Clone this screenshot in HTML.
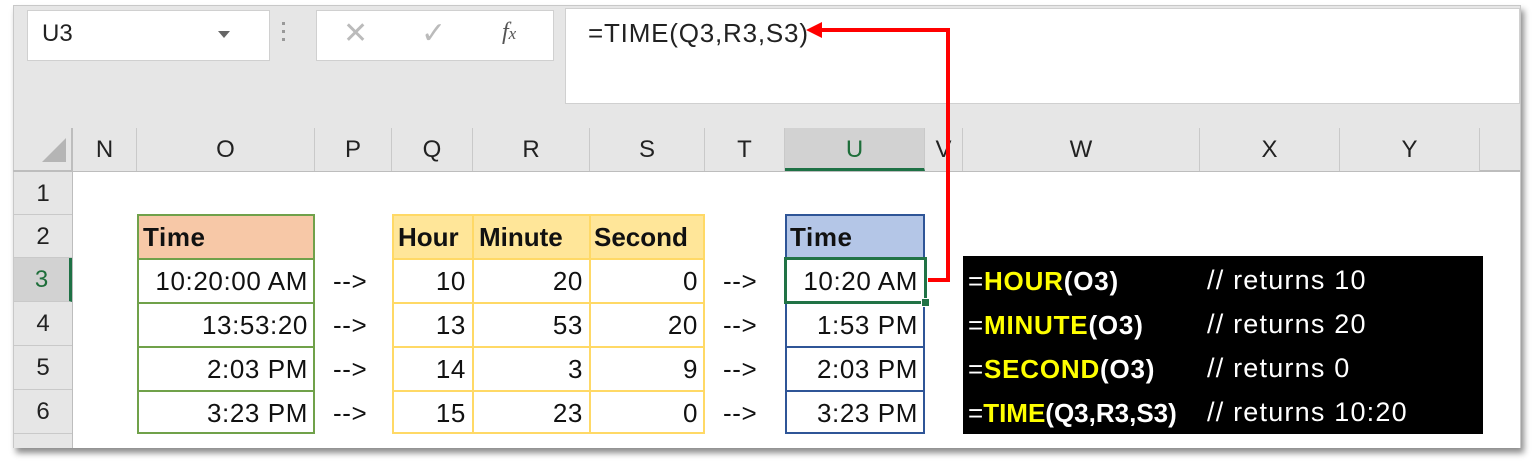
<!DOCTYPE html>
<html><head><meta charset="utf-8"><style>
*{margin:0;padding:0;box-sizing:border-box}
body{width:1536px;height:474px;background:#fff;position:relative;overflow:hidden;font-family:"Liberation Sans",sans-serif}
.a{position:absolute}
.frame{left:13px;top:5px;width:1508px;height:443px;background:#e6e6e6;border:1px solid #c8c8c8;box-shadow:3px 5px 6px rgba(0,0,0,.45)}
.box{background:#fff;border:1px solid #d0d0d0}
.ch{top:128px;height:43px;font-size:24px;color:#222;text-align:center;line-height:43px;border-right:1px solid #c9c9c9;background:#e6e6e6}
.rh{left:14px;width:58px;font-size:24px;color:#222;text-align:center;border-bottom:1px solid #c9c9c9;background:#e6e6e6}
.c{font-size:26px;color:#111;line-height:43px;padding:0 7px;letter-spacing:0.6px;white-space:nowrap}
.r{text-align:right}
.f{font-size:26px;color:#fff;letter-spacing:0.8px;white-space:nowrap}
.g{font-size:27px;letter-spacing:1.2px}
.y{color:#ffff00}
</style></head><body>
<div class="a frame"></div>
<div class="a box" style="left:27px;top:10px;width:243px;height:51px"></div>
<div class="a" style="left:42px;top:20px;font-size:24px;color:#222">U3</div>
<div class="a" style="left:218px;top:31px;width:0;height:0;border-left:6px solid transparent;border-right:6px solid transparent;border-top:7px solid #666"></div>
<div class="a" style="left:282px;top:22px;width:3px;height:3px;background:#999;box-shadow:0 8px 0 #999,0 16px 0 #999"></div>
<div class="a box" style="left:316px;top:10px;width:238px;height:51px"></div>
<div class="a" style="left:343px;top:16px;font-size:30px;color:#bbb">✕</div>
<div class="a" style="left:421px;top:16px;font-size:30px;color:#bbb">✓</div>
<div class="a" style="left:502px;top:19px;font-size:24px;color:#555;font-style:italic;font-family:'Liberation Serif',serif">f<span style="font-size:17px">x</span></div>
<div class="a box" style="left:565px;top:8px;width:955px;height:96px"></div>
<div class="a" style="left:588px;top:18px;font-size:26px;color:#222;letter-spacing:0.8px">=TIME(Q3,R3,S3)</div>
<!-- grid -->
<div class="a" style="left:72px;top:171px;width:1448px;height:277px;background:#fff"></div>
<div class="a" style="left:13px;top:170px;width:1507px;height:2px;background:#bdbdbd"></div>
<div class="a" style="left:71px;top:128px;width:2px;height:320px;background:#bdbdbd"></div>
<div class="a" style="left:42px;top:138px;width:0;height:0;border-left:24px solid transparent;border-bottom:24px solid #b5b5b5"></div>
<div class="a ch" style="left:73px;width:64px">N</div>
<div class="a ch" style="left:137px;width:178px">O</div>
<div class="a ch" style="left:315px;width:77px">P</div>
<div class="a ch" style="left:392px;width:81px">Q</div>
<div class="a ch" style="left:473px;width:117px">R</div>
<div class="a ch" style="left:590px;width:115px">S</div>
<div class="a ch" style="left:705px;width:80px">T</div>
<div class="a ch" style="left:785px;width:140px;background:#d2d2d2;color:#1e6e3a;border-bottom:3px solid #1e7145">U</div>
<div class="a ch" style="left:925px;width:38px">V</div>
<div class="a ch" style="left:963px;width:237px">W</div>
<div class="a ch" style="left:1200px;width:140px">X</div>
<div class="a ch" style="left:1340px;width:140px">Y</div>
<div class="a rh" style="top:172px;height:43px;line-height:43px">1</div>
<div class="a rh" style="top:215px;height:43px;line-height:43px">2</div>
<div class="a rh" style="top:258px;height:44px;line-height:44px;background:#d2d2d2;color:#1e6e3a;border-right:3px solid #1e7145">3</div>
<div class="a rh" style="top:302px;height:44px;line-height:44px">4</div>
<div class="a rh" style="top:346px;height:44px;line-height:44px">5</div>
<div class="a rh" style="top:390px;height:44px;line-height:44px">6</div>
<div class="a rh" style="top:434px;height:14px;border:0"></div>
<!-- O table -->
<div class="a" style="left:137px;top:214px;width:178px;height:220px;border:2px solid #70a14a"></div>
<div class="a c" style="left:139px;top:216px;width:174px;height:42px;background:#f7c8a7;font-weight:bold;padding-left:4px">Time</div>
<div class="a" style="left:137px;top:258px;width:178px;height:2px;background:#70a14a"></div>
<div class="a" style="left:137px;top:302px;width:178px;height:2px;background:#70a14a"></div>
<div class="a" style="left:137px;top:346px;width:178px;height:2px;background:#70a14a"></div>
<div class="a" style="left:137px;top:390px;width:178px;height:2px;background:#70a14a"></div>
<div class="a c r" style="left:137px;top:260px;width:178px">10:20:00 AM</div>
<div class="a c r" style="left:137px;top:304px;width:178px">13:53:20</div>
<div class="a c r" style="left:137px;top:348px;width:178px">2:03 PM</div>
<div class="a c r" style="left:137px;top:392px;width:178px">3:23 PM</div>
<!-- arrows -->
<div class="a c" style="left:326px;top:260px">--&gt;</div>
<div class="a c" style="left:326px;top:304px">--&gt;</div>
<div class="a c" style="left:326px;top:348px">--&gt;</div>
<div class="a c" style="left:326px;top:392px">--&gt;</div>
<div class="a c" style="left:716px;top:260px">--&gt;</div>
<div class="a c" style="left:716px;top:304px">--&gt;</div>
<div class="a c" style="left:716px;top:348px">--&gt;</div>
<div class="a c" style="left:716px;top:392px">--&gt;</div>
<!-- QRS table -->
<div class="a" style="left:392px;top:214px;width:313px;height:44px;background:#ffe699"></div>
<div class="a" style="left:392px;top:214px;width:313px;height:220px;border:2px solid #ffd966"></div>
<div class="a" style="left:472px;top:214px;width:2px;height:220px;background:#ffd966"></div>
<div class="a" style="left:589px;top:214px;width:2px;height:220px;background:#ffd966"></div>
<div class="a" style="left:392px;top:258px;width:313px;height:2px;background:#ffd966"></div>
<div class="a" style="left:392px;top:302px;width:313px;height:2px;background:#ffd966"></div>
<div class="a" style="left:392px;top:346px;width:313px;height:2px;background:#ffd966"></div>
<div class="a" style="left:392px;top:390px;width:313px;height:2px;background:#ffd966"></div>
<div class="a c" style="left:392px;top:216px;font-weight:bold;padding-left:6px;letter-spacing:0">Hour</div>
<div class="a c" style="left:474px;top:216px;font-weight:bold;padding-left:5px;letter-spacing:0">Minute</div>
<div class="a c" style="left:591px;top:216px;font-weight:bold;padding-left:3px;letter-spacing:0">Second</div>
<div class="a c r" style="left:392px;top:260px;width:81px">10</div>
<div class="a c r" style="left:473px;top:260px;width:117px">20</div>
<div class="a c r" style="left:590px;top:260px;width:115px">0</div>
<div class="a c r" style="left:392px;top:304px;width:81px">13</div>
<div class="a c r" style="left:473px;top:304px;width:117px">53</div>
<div class="a c r" style="left:590px;top:304px;width:115px">20</div>
<div class="a c r" style="left:392px;top:348px;width:81px">14</div>
<div class="a c r" style="left:473px;top:348px;width:117px">3</div>
<div class="a c r" style="left:590px;top:348px;width:115px">9</div>
<div class="a c r" style="left:392px;top:392px;width:81px">15</div>
<div class="a c r" style="left:473px;top:392px;width:117px">23</div>
<div class="a c r" style="left:590px;top:392px;width:115px">0</div>
<!-- U table -->
<div class="a" style="left:785px;top:214px;width:140px;height:44px;background:#b4c6e7"></div>
<div class="a" style="left:785px;top:214px;width:140px;height:220px;border:2px solid #2f5597"></div>
<div class="a" style="left:785px;top:258px;width:140px;height:2px;background:#2f5597"></div>
<div class="a" style="left:785px;top:302px;width:140px;height:2px;background:#2f5597"></div>
<div class="a" style="left:785px;top:346px;width:140px;height:2px;background:#2f5597"></div>
<div class="a" style="left:785px;top:390px;width:140px;height:2px;background:#2f5597"></div>
<div class="a c" style="left:787px;top:216px;font-weight:bold;padding-left:3px">Time</div>
<div class="a" style="left:784px;top:257px;width:143px;height:47px;border:3px solid #217346;background:#fff"></div>
<div class="a" style="left:921px;top:298px;width:9px;height:9px;background:#217346;border:1px solid #fff"></div>
<div class="a c r" style="left:785px;top:260px;width:140px">10:20 AM</div>
<div class="a c r" style="left:785px;top:304px;width:140px">1:53 PM</div>
<div class="a c r" style="left:785px;top:348px;width:140px">2:03 PM</div>
<div class="a c r" style="left:785px;top:392px;width:140px">3:23 PM</div>
<!-- black box -->
<div class="a" style="left:963px;top:256px;width:520px;height:178px;background:#000"></div>
<div class="a f" style="left:968px;top:266px">=<b class="y">HOUR</b><b>(O3)</b></div>
<div class="a f" style="left:968px;top:310px">=<b class="y">MINUTE</b><b>(O3)</b></div>
<div class="a f" style="left:968px;top:354px">=<b class="y">SECOND</b><b>(O3)</b></div>
<div class="a f" style="left:968px;top:398px;letter-spacing:0">=<b class="y">TIME</b><b>(Q3,R3,S3)</b></div>
<div class="a f g" style="left:1207px;top:265px">// returns 10</div>
<div class="a f g" style="left:1207px;top:309px">// returns 20</div>
<div class="a f g" style="left:1207px;top:353px">// returns 0</div>
<div class="a f g" style="left:1207px;top:397px">// returns 10:20</div>
<!-- red arrow -->
<svg class="a" style="left:0;top:0" width="1536" height="474">
<polyline points="928,280 948,280 948,30 818,30" fill="none" stroke="#ff0000" stroke-width="4"/>
<polygon points="806,30 822,22 822,38" fill="#ff0000"/>
</svg>
</body></html>
